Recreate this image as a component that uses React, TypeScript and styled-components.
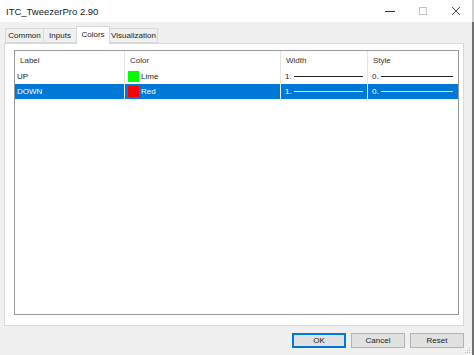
import React from "react";
import styled, { createGlobalStyle } from "styled-components";

const GlobalStyle = createGlobalStyle`
  html, body { margin: 0; padding: 0; }
  body {
    width: 474px; height: 355px; overflow: hidden;
    font-family: "Liberation Sans", Arial, sans-serif;
    font-size: 8px; color: #1a1a1a; background: #f0f0f0;
  }
`;

const Frame = styled.div`
  display: flex;
  width: 474px;
  height: 355px;
`;

const Window = styled.div`
  flex: 1;
  display: flex;
  flex-direction: column;
  background: #f0f0f0;
  position: relative;
`;

const RightEdge = styled.div`
  width: 2px;
  background: linear-gradient(#cfcfcf 0 22px, #6f6f6f 22px);
`;

const TitleBar = styled.div`
  height: 22px;
  background: #fff;
  display: flex;
  align-items: center;
  padding-left: 6px;
`;

const Title = styled.div`
  flex: 1;
  font-size: 9.5px;
  color: #222;
`;

const Controls = styled.div`
  display: flex;
  height: 22px;
`;

const CtrlBtn = styled.div`
  width: 33px;
  height: 22px;
  display: flex;
  align-items: center;
  justify-content: center;
`;

const Body = styled.div`
  flex: 1;
  display: flex;
  flex-direction: column;
  padding: 4px 8px 0 4px;
`;

const TabStrip = styled.div`
  height: 17px;
  display: flex;
  align-items: flex-end;
  padding-left: 2px;
  position: relative;
  z-index: 1;
`;

const Tab = styled.div<{ $active?: boolean; $w: number }>`
  width: ${(p) => p.$w}px;
  box-sizing: border-box;
  height: ${(p) => (p.$active ? 18 : 15)}px;
  margin-bottom: ${(p) => (p.$active ? -1 : 0)}px;
  background: ${(p) => (p.$active ? "#fff" : "#f0f0f0")};
  border: 1px solid #d9d9d9;
  border-bottom: ${(p) => (p.$active ? "none" : "1px solid #d9d9d9")};
  margin-left: -1px;
  display: flex;
  align-items: center;
  justify-content: center;
  padding-bottom: ${(p) => (p.$active ? 2 : 0)}px;
  font-size: 8px;
  color: #1a1a1a;
`;

const Panel = styled.div`
  height: 283px;
  box-sizing: border-box;
  background: #fff;
  border: 1px solid #d9d9d9;
  padding: 6px 4px 10px 9px;
  display: flex;
`;

const ListView = styled.div`
  flex: 1;
  border: 1px solid #999;
  display: flex;
  flex-direction: column;
`;

const Row = styled.div<{ $sel?: boolean; $h: number }>`
  display: grid;
  grid-template-columns: 110px 156px 87px 1fr;
  height: ${(p) => p.$h}px;
  background: ${(p) => (p.$sel ? "#0078d7" : "#fff")};
  color: ${(p) => (p.$sel ? "#fff" : "#1a1a1a")};
`;

const HeadCell = styled.div`
  display: flex;
  align-items: center;
  padding-left: 5px;
  border-right: 1px solid #e5e5e5;
  color: #333;
  &:last-child { border-right: none; }
`;

const Cell = styled.div<{ $sel?: boolean }>`
  display: flex;
  align-items: center;
  padding-left: 2px;
  border-right: 1px solid ${(p) => (p.$sel ? "#e8f1fb" : "#e5e5e5")};
  overflow: hidden;
  &:last-child { border-right: none; }
`;

const Swatch = styled.span<{ $c: string }>`
  width: 9px;
  height: 9px;
  background: ${(p) => p.$c};
  border: 1px solid ${(p) => p.$c};
  margin: 0 2px 0 1px;
`;

const LineValue = styled.span`
  padding-left: 2px;
  width: 9px;
`;

const StyleLine = styled.span<{ $sel?: boolean; $w: number }>`
  width: ${(p) => p.$w}px;
  height: 1px;
  background: ${(p) => (p.$sel ? "#cfe3f7" : "#222")};
`;

const Footer = styled.div`
  flex: 1;
  display: flex;
  justify-content: flex-end;
  align-items: flex-start;
  padding-top: 7px;
  gap: 5px;
`;

const Button = styled.div<{ $default?: boolean }>`
  width: 54px;
  height: 15px;
  box-sizing: border-box;
  background: #e1e1e1;
  border: 1px solid ${(p) => (p.$default ? "#0078d7" : "#b4b4b4")};
  ${(p) => (p.$default ? "box-shadow: inset 0 0 0 1px #0078d7;" : "")}
  display: flex;
  align-items: center;
  justify-content: center;
  font-size: 8px;
  color: #1a1a1a;
`;

const Grip = styled.svg`
  position: absolute;
  right: 1px;
  bottom: 1px;
`;

const rows = [
  { label: "UP", color: "#00ff00", name: "Lime", sel: false },
  { label: "DOWN", color: "#ff0000", name: "Red", sel: true },
];

export default function App() {
  return (
    <Frame>
      <GlobalStyle />
      <Window>
        <TitleBar>
          <Title>ITC_TweezerPro 2.90</Title>
          <Controls>
            <CtrlBtn>
              <svg width="10" height="10" viewBox="0 0 10 10">
                <line x1="0" y1="5.5" x2="10" y2="5.5" stroke="#333" strokeWidth="1" />
              </svg>
            </CtrlBtn>
            <CtrlBtn>
              <svg width="10" height="10" viewBox="0 0 10 10">
                <rect x="1.5" y="1.5" width="7" height="7" fill="none" stroke="#c4c4c4" strokeWidth="1" />
              </svg>
            </CtrlBtn>
            <CtrlBtn>
              <svg width="10" height="10" viewBox="0 0 10 10">
                <path d="M1 1 L9 9 M9 1 L1 9" stroke="#333" strokeWidth="0.9" />
              </svg>
            </CtrlBtn>
          </Controls>
        </TitleBar>
        <Body>
          <TabStrip>
            <Tab $w={39}>Common</Tab>
            <Tab $w={34}>Inputs</Tab>
            <Tab $w={34} $active>Colors</Tab>
            <Tab $w={49}>Visualization</Tab>
          </TabStrip>
          <Panel>
            <ListView>
              <Row $h={18}>
                <HeadCell>Label</HeadCell>
                <HeadCell>Color</HeadCell>
                <HeadCell>Width</HeadCell>
                <HeadCell>Style</HeadCell>
              </Row>
              {rows.map((r) => (
                <Row key={r.label} $h={15} $sel={r.sel}>
                  <Cell $sel={r.sel}>{r.label}</Cell>
                  <Cell $sel={r.sel}>
                    <Swatch $c={r.color} />
                    {r.name}
                  </Cell>
                  <Cell $sel={r.sel}>
                    <LineValue>1.</LineValue>
                    <StyleLine $sel={r.sel} $w={69} />
                  </Cell>
                  <Cell $sel={r.sel}>
                    <LineValue>0.</LineValue>
                    <StyleLine $sel={r.sel} $w={72} />
                  </Cell>
                </Row>
              ))}
            </ListView>
          </Panel>
          <Footer>
            <Button $default>OK</Button>
            <Button>Cancel</Button>
            <Button>Reset</Button>
          </Footer>
        </Body>
        <Grip width="6" height="6" viewBox="0 0 6 6">
          <rect x="4" y="0" width="1" height="1" fill="#bbb" />
          <rect x="2" y="2" width="1" height="1" fill="#bbb" />
          <rect x="4" y="2" width="1" height="1" fill="#bbb" />
          <rect x="0" y="4" width="1" height="1" fill="#bbb" />
          <rect x="2" y="4" width="1" height="1" fill="#bbb" />
          <rect x="4" y="4" width="1" height="1" fill="#bbb" />
        </Grip>
      </Window>
      <RightEdge />
    </Frame>
  );
}
